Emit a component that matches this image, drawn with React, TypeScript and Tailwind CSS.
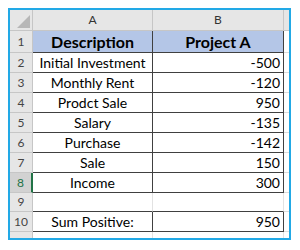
import React from "react";

const rows: [string, string, string][] = [
  ["2", "Initial Investment", "-500"],
  ["3", "Monthly Rent", "-120"],
  ["4", "Prodct Sale", "950"],
  ["5", "Salary", "-135"],
  ["6", "Purchase", "-142"],
  ["7", "Sale", "150"],
  ["8", "Income", "300"],
];

const rh = "flex items-center justify-center bg-[#e6e6e6] border-r border-b border-[#c6c6c6] text-[12px] text-[#444]";

export default function App() {
  return (
    <div className="w-[300px] h-[250px] bg-white pt-[8px] pl-[8px]" style={{ fontFamily: "Lato, 'Open Sans', sans-serif" }}>
      <div className="w-[283px] h-[232px] border-2 border-[#22a9e6] overflow-hidden">
        <div className="grid grid-cols-[23px_120px_131px_9px] grid-rows-[21px_22px_repeat(7,20px)_19px_20px_20px] text-[14px] text-black">
          {/* header row */}
          <div className="relative bg-[#e6e6e6] border-r border-b border-[#c6c6c6]">
            <div className="absolute right-[2px] bottom-[2px] w-0 h-0 border-l-[13px] border-l-transparent border-b-[13px] border-b-[#b7b7b7]" />
          </div>
          <div className="flex items-center justify-center bg-[#e6e6e6] border-r border-b border-[#c6c6c6] text-[12px] text-[#333]">A</div>
          <div className="flex items-center justify-center bg-[#e6e6e6] border-r border-b border-[#c6c6c6] text-[12px] text-[#333]">B</div>
          <div className="bg-[#e6e6e6] border-b border-[#c6c6c6]" />

          {/* row 1 */}
          <div className={rh}>1</div>
          <div className="flex items-center justify-center bg-[#b4c6e7] border-r border-b border-[#404040] font-bold text-[16px]">Description</div>
          <div className="flex items-center justify-center bg-[#b4c6e7] border-r border-b border-[#404040] font-bold text-[16px]">Project A</div>
          <div className="border-b border-[#dcdcdc]" />

          {rows.map(([n, a, b]) => {
            const active = n === "8";
            return (
              <React.Fragment key={n}>
                <div
                  className={
                    active
                      ? "flex items-center justify-center bg-[#d2d2d2] border-r-2 border-r-[#217346] border-b border-b-[#c6c6c6] text-[12px] text-[#217346]"
                      : rh
                  }
                >
                  {n}
                </div>
                <div className="flex items-center justify-center border-r border-b border-[#404040]">{a}</div>
                <div className="flex items-center justify-end pr-[3px] border-r border-b border-[#404040]">{b}</div>
                <div className="border-b border-[#dcdcdc]" />
              </React.Fragment>
            );
          })}

          {/* row 9 */}
          <div className={rh}>9</div>
          <div className="border-r border-[#e2e2e2] border-b border-b-[#404040]" />
          <div className="border-r border-[#e2e2e2] border-b border-b-[#404040]" />
          <div className="border-b border-[#dcdcdc]" />

          {/* row 10 */}
          <div className={rh}>10</div>
          <div className="flex items-center justify-center border-r border-b border-[#404040]">Sum Positive:</div>
          <div className="flex items-center justify-end pr-[3px] border-r border-b border-[#404040]">950</div>
          <div className="border-b border-[#dcdcdc]" />

          {/* row 11 partial */}
          <div className="bg-[#e6e6e6] border-r border-[#c6c6c6]" />
          <div className="border-r border-[#e2e2e2]" />
          <div className="border-r border-[#e2e2e2]" />
          <div />
        </div>
      </div>
    </div>
  );
}
